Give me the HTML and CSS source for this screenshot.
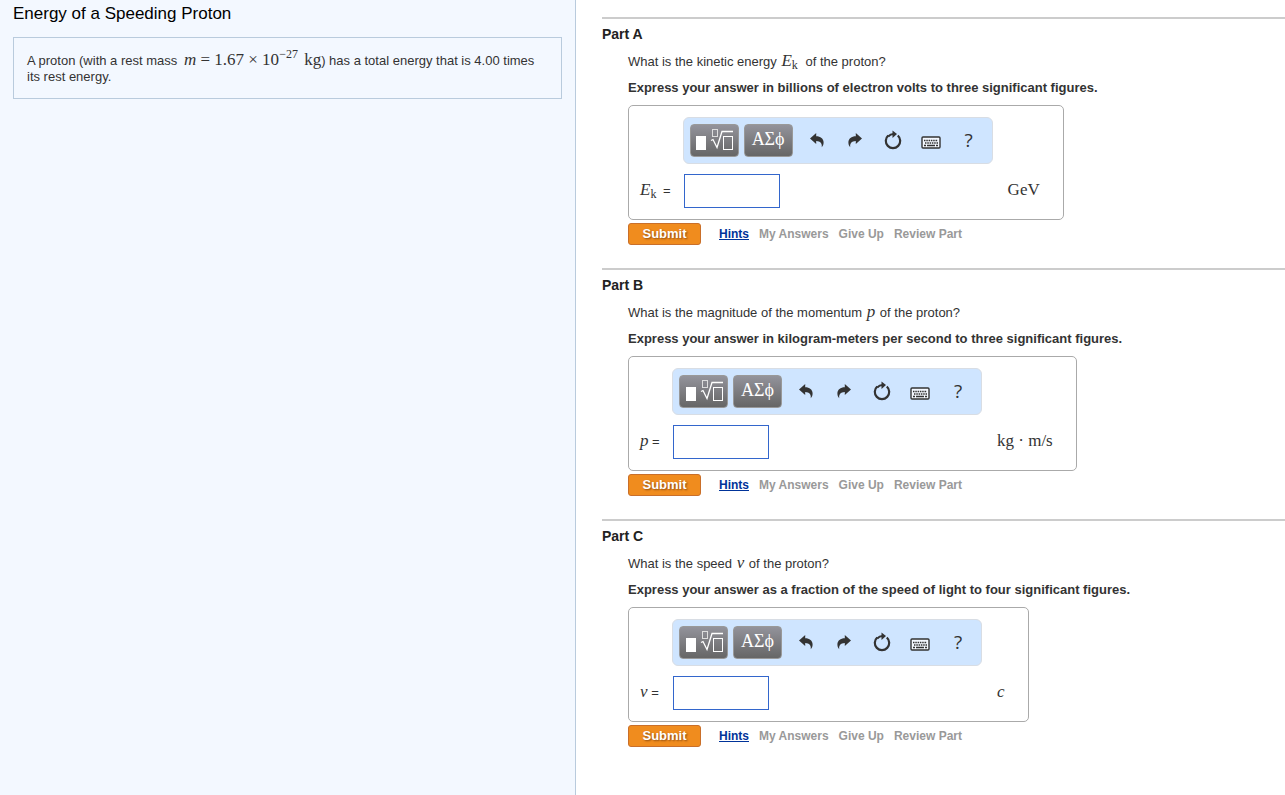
FILE: index.html
```html
<!DOCTYPE html>
<html lang="en">
<head>
    <meta charset="UTF-8">
    <meta name="viewport" content="width=device-width, initial-scale=1.0">
    <title>Energy of a Speeding Proton</title>
    <link rel="stylesheet" href="styles.css">
</head>
<body>
    <!-- Shared icons -->
    <svg class="sprite" aria-hidden="true">
        <symbol id="icon-template" viewBox="0 0 38 24">
            <rect x="1" y="8" width="10" height="14" fill="#fff"/>
            <rect x="17.5" y="1.5" width="5" height="7" fill="none" stroke="#ddd"/>
            <path d="M16 12.5l2-1 4 8L27 3.500h11" fill="none" stroke="#fff" stroke-width="1.3"/>
            <rect x="28.5" y="8.5" width="9" height="13" fill="none" stroke="#fff"/>
        </symbol>
        <symbol id="icon-undo" viewBox="0 0 16 16">
            <path d="M1 6.5L7.2 1v3.200c4.300 0 7.400 2.400 7.400 6.200 0 2-.7 3.600-1.900 4.900.7-3.800-1.300-6.200-5.500-6.300v3z" fill="#333"/>
        </symbol>
        <symbol id="icon-redo" viewBox="0 0 16 16">
            <path d="M15 6.500L8.800 1v3.200C4.500 4.200 1.400 6.600 1.400 10.400c0 2 .7 3.600 1.900 4.900-.7-3.800 1.300-6.200 5.500-6.300v3z" fill="#333"/>
        </symbol>
        <symbol id="icon-reset" viewBox="0 0 18 20">
            <path d="M13.800 5.500A7.200 7.200 0 1 1 4.200 5.500" fill="none" stroke="#333" stroke-width="2.200"/>
            <path d="M4.200 6.500Q6.500 4 9.500 4" fill="none" stroke="#333" stroke-width="2"/>
            <path d="M8.500 .5l4.500 3.500-4.500 4z" fill="#333"/>
        </symbol>
        <symbol id="icon-keyboard" viewBox="0 0 20 14">
            <rect x="1" y="1" width="18" height="11" rx="1" fill="#f4f8ff" stroke="#333" stroke-width="1.4"/>
            <path d="M3 4.500h14M4 7h13" stroke="#333" stroke-width="1.400" stroke-dasharray="1.500 .8"/>
            <path d="M3 9.500h2M6 9.500h8M15 9.500h2" stroke="#333" stroke-width="1.400"/>
        </symbol>
    </svg>

    <div class="layout">
        <aside class="intro">
            <h1>Energy of a Speeding Proton</h1>
            <div class="intro-box">
                A proton (with a rest mass <span class="math"><i>m</i> = 1.67 × 10<sup>−27</sup> kg</span>) has a total energy that is 4.00 times its rest energy.
            </div>
        </aside>

        <main class="parts">
            <section class="part">
                <h2>Part A</h2>
                <form class="part-body">
                    <p>What is the kinetic energy <span class="math"><i>E</i><sub>k</sub></span> of the proton?</p>
                    <p class="instruction">Express your answer in billions of electron volts to three significant figures.</p>
                    <div class="answer-box">
                        <div class="toolbar">
                            <button type="button" class="tool-button" aria-label="Templates"><svg width="38" height="24"><use href="#icon-template"/></svg></button>
                            <button type="button" class="tool-button">ΑΣϕ</button>
                            <button type="button" class="icon-button" aria-label="Undo"><svg width="16" height="16"><use href="#icon-undo"/></svg></button>
                            <button type="button" class="icon-button" aria-label="Redo"><svg width="16" height="16"><use href="#icon-redo"/></svg></button>
                            <button type="button" class="icon-button" aria-label="Reset"><svg width="18" height="20"><use href="#icon-reset"/></svg></button>
                            <button type="button" class="icon-button" aria-label="Keyboard"><svg class="keyboard" width="20" height="14"><use href="#icon-keyboard"/></svg></button>
                            <button type="button" class="icon-button">?</button>
                        </div>
                        <label for="answer-a"><span class="math"><i>E</i><sub>k</sub></span> =</label>
                        <input type="text" id="answer-a" name="answer-a">
                        <span class="unit math">GeV</span>
                    </div>
                    <div class="actions">
                        <button type="submit" class="submit">Submit</button>
                        <a href="#hints" class="hints">Hints</a>
                        <a href="#answers">My Answers</a>
                        <a href="#giveup">Give Up</a>
                        <a href="#review">Review Part</a>
                    </div>
                </form>
            </section>

            <section class="part">
                <h2>Part B</h2>
                <form class="part-body">
                    <p>What is the magnitude of the momentum <span class="math"><i>p</i></span> of the proton?</p>
                    <p class="instruction">Express your answer in kilogram-meters per second to three significant figures.</p>
                    <div class="answer-box">
                        <div class="toolbar">
                            <button type="button" class="tool-button" aria-label="Templates"><svg width="38" height="24"><use href="#icon-template"/></svg></button>
                            <button type="button" class="tool-button">ΑΣϕ</button>
                            <button type="button" class="icon-button" aria-label="Undo"><svg width="16" height="16"><use href="#icon-undo"/></svg></button>
                            <button type="button" class="icon-button" aria-label="Redo"><svg width="16" height="16"><use href="#icon-redo"/></svg></button>
                            <button type="button" class="icon-button" aria-label="Reset"><svg width="18" height="20"><use href="#icon-reset"/></svg></button>
                            <button type="button" class="icon-button" aria-label="Keyboard"><svg class="keyboard" width="20" height="14"><use href="#icon-keyboard"/></svg></button>
                            <button type="button" class="icon-button">?</button>
                        </div>
                        <label for="answer-b"><span class="math"><i>p</i></span> =</label>
                        <input type="text" id="answer-b" name="answer-b">
                        <span class="unit math">kg · m/s</span>
                    </div>
                    <div class="actions">
                        <button type="submit" class="submit">Submit</button>
                        <a href="#hints" class="hints">Hints</a>
                        <a href="#answers">My Answers</a>
                        <a href="#giveup">Give Up</a>
                        <a href="#review">Review Part</a>
                    </div>
                </form>
            </section>

            <section class="part">
                <h2>Part C</h2>
                <form class="part-body">
                    <p>What is the speed <span class="math"><i>v</i></span> of the proton?</p>
                    <p class="instruction">Express your answer as a fraction of the speed of light to four significant figures.</p>
                    <div class="answer-box">
                        <div class="toolbar">
                            <button type="button" class="tool-button" aria-label="Templates"><svg width="38" height="24"><use href="#icon-template"/></svg></button>
                            <button type="button" class="tool-button">ΑΣϕ</button>
                            <button type="button" class="icon-button" aria-label="Undo"><svg width="16" height="16"><use href="#icon-undo"/></svg></button>
                            <button type="button" class="icon-button" aria-label="Redo"><svg width="16" height="16"><use href="#icon-redo"/></svg></button>
                            <button type="button" class="icon-button" aria-label="Reset"><svg width="18" height="20"><use href="#icon-reset"/></svg></button>
                            <button type="button" class="icon-button" aria-label="Keyboard"><svg class="keyboard" width="20" height="14"><use href="#icon-keyboard"/></svg></button>
                            <button type="button" class="icon-button">?</button>
                        </div>
                        <label for="answer-c"><span class="math"><i>v</i></span> =</label>
                        <input type="text" id="answer-c" name="answer-c">
                        <span class="unit math"><i>c</i></span>
                    </div>
                    <div class="actions">
                        <button type="submit" class="submit">Submit</button>
                        <a href="#hints" class="hints">Hints</a>
                        <a href="#answers">My Answers</a>
                        <a href="#giveup">Give Up</a>
                        <a href="#review">Review Part</a>
                    </div>
                </form>
            </section>
        </main>
    </div>
</body>
</html>
```
FILE: styles.css
```css
:root {
    --panel-bg: #f3f8ff;
    --panel-border: #b9cbdd;
    --text-color: #333;
    --link-color: #003399;
    --submit-color: #f08c1e;
}

* {
    box-sizing: border-box;
}

body {
    font-family: "Liberation Sans", Arial, sans-serif;
    font-size: 13px;
    line-height: 16px;
    margin: 0;
    color: var(--text-color);
    background-color: #fff;
}

.sprite {
    display: none;
}

.layout {
    display: grid;
    grid-template-columns: 576fr 709fr;
    min-height: 100vh;
}

.intro {
    padding: 4px 13px;
    background-color: var(--panel-bg);
    border-right: 1px solid var(--panel-border);
}

h1 {
    margin: 0 0 13px;
    font-size: 17px;
    font-weight: normal;
    line-height: 20px;
    color: #000;
}

.intro-box {
    padding: 14px 13px 13px;
    border: 1px solid var(--panel-border);
}

.math {
    font-family: "Liberation Serif", "Times New Roman", serif;
    font-size: 17px;
    line-height: 16px;
}

.intro-box .math {
    margin-left: 3px;
    word-spacing: normal;
}

.math sub,
.math sup {
    font-size: 12px;
    line-height: 0;
}

.math sup {
    margin-right: 2px;
}

.math sub {
    margin-right: 3px;
    vertical-align: -3px;
}

.parts {
    padding: 17px 0 0 26px;
}

.part {
    border-top: 2px solid #ccc;
    padding-bottom: 23px;
}

h2 {
    margin: 7px 0 11px;
    font-size: 14px;
    line-height: 16px;
    color: #222;
}

.part-body {
    padding-left: 26px;
}

p {
    margin: 0 0 10px;
}

p .math {
    margin: 0 1px;
}

.instruction {
    margin-bottom: 9px;
    font-weight: bold;
}

.answer-box {
    display: inline-grid;
    grid-template-columns: auto 310px auto;
    row-gap: 10px;
    align-items: center;
    vertical-align: top;
    padding: 11px 23px 11px 11px;
    border: 1px solid #aaa;
    border-radius: 5px;
}

.toolbar {
    grid-column: 2;
    display: flex;
    align-items: center;
    height: 47px;
    padding-left: 6px;
    background-color: #cfe5ff;
    border: 1px solid #d8dde4;
    border-radius: 6px;
}

.tool-button {
    display: flex;
    align-items: center;
    justify-content: center;
    width: 49px;
    height: 33px;
    margin-right: 5px;
    padding: 0 0 2px;
    border: 1px solid #999;
    border-radius: 4px;
    background: linear-gradient(#93939b, #666);
    color: #fff;
    font-family: "Liberation Serif", serif;
    font-size: 18px;
    cursor: pointer;
}

.icon-button {
    display: flex;
    align-items: center;
    justify-content: center;
    width: 38px;
    height: 33px;
    padding: 0 0 2px;
    border: none;
    background: none;
    color: #333;
    font-family: "Open Sans", sans-serif;
    font-size: 19px;
    cursor: pointer;
}

.keyboard {
    margin-top: 6px;
}

.answer-box label {
    grid-column: 1;
    min-width: 32px;
    padding: 0 12px 2px 0;
}

.answer-box input {
    width: 96px;
    height: 34px;
    margin-left: 1px;
    padding: 4px;
    border: 1px solid #3366cc;
    font-size: 16px;
}

.unit {
    padding: 0 0 2px 15px;
}

.actions {
    display: flex;
    align-items: center;
    gap: 10px;
    margin-top: 3px;
    font-size: 12px;
    font-weight: bold;
}

.actions a {
    color: #999;
    text-decoration: none;
}

.actions .hints {
    color: var(--link-color);
    text-decoration: underline;
}

.submit {
    width: 73px;
    height: 22px;
    margin-right: 8px;
    padding: 0 0 2px;
    border: 1px solid #c96f2a;
    border-radius: 3px;
    background-color: var(--submit-color);
    color: #fff;
    font-family: inherit;
    font-size: 13px;
    font-weight: bold;
    text-shadow: 1px 1px 2px #8a4a10;
    cursor: pointer;
}
```
